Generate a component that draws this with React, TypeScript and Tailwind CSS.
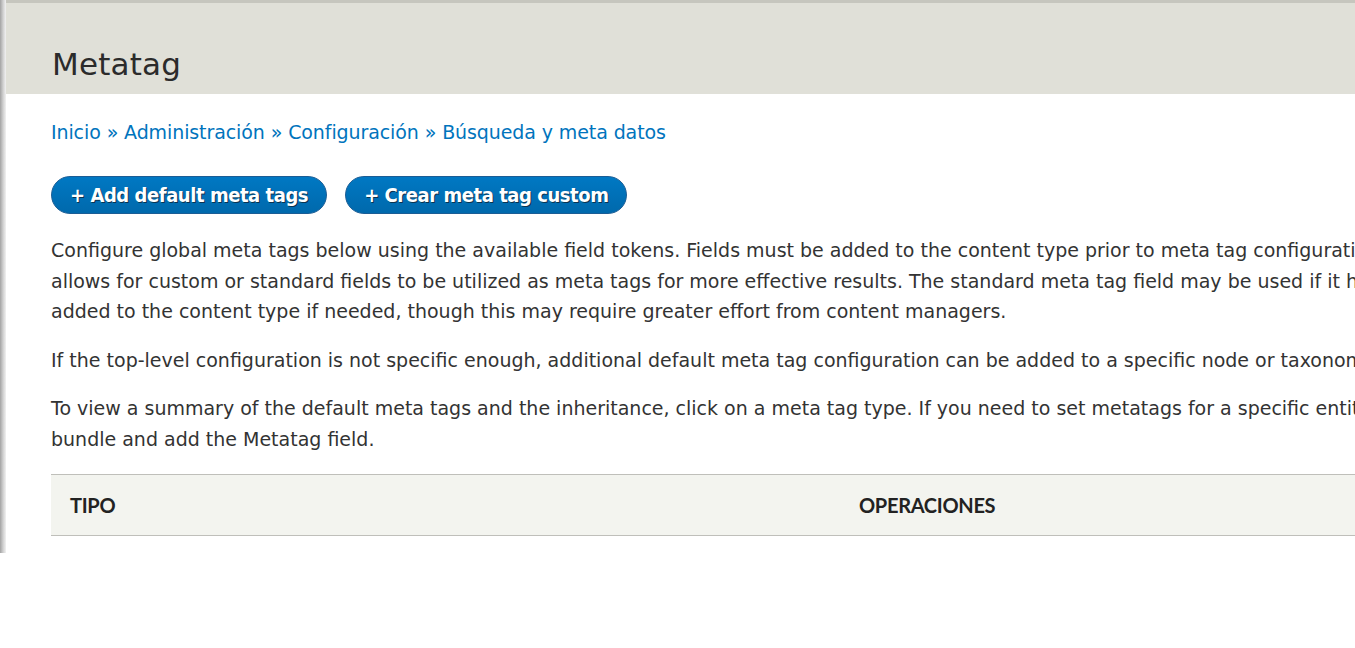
const body = "font-['DejaVu_Sans','Lucida_Grande',sans-serif]";

function Button({ label }: { label: string }) {
  return (
    <a
      href="#"
      className="inline-flex items-center h-[38px] px-[18px] rounded-full border border-[#1b5d95] bg-gradient-to-b from-[#0078c3] to-[#0069ac] text-white font-bold text-[20px] tracking-[-0.45px] font-['DejaVu_Sans_Condensed','DejaVu_Sans',sans-serif] [font-stretch:condensed] [text-shadow:1px_1px_0_#0b3350] whitespace-nowrap"
    >
      + {label}
    </a>
  );
}

export default function App() {
  return (
    <div className="w-[1355px] h-[648px] bg-white overflow-hidden">
      <div className="flex h-[553px] overflow-hidden">
        <div className="w-[6px] shrink-0 bg-gradient-to-r from-[#a3a3a3] via-[#cfcfcf] to-[#f2f2f2]" />
        <div className={`flex-1 min-w-0 ${body} text-[#333]`}>
          <header className="h-[94px] bg-[#e0e0d8] border-t-[3px] border-[#c6c6be] px-[46px] flex items-end pb-[14px]">
            <h1 className="text-[31px] leading-none font-normal text-[#2b2b2b] tracking-[0.2px]">
              Metatag
            </h1>
          </header>

          <div className="pl-[45px] w-[1500px]">
            <nav className="mt-[26px] text-[19px] tracking-[-0.1px] text-[#0074bd] leading-[24px]">
              <a href="#">Inicio</a> » <a href="#">Administración</a> »{" "}
              <a href="#">Configuración</a> » <a href="#">Búsqueda y meta datos</a>
            </nav>

            <div className="flex gap-[18px] mt-[32px]">
              <Button label="Add default meta tags" />
              <Button label="Crear meta tag custom" />
            </div>

            <div className="mt-[21px] text-[19px] leading-[30.5px] text-[#333] whitespace-nowrap">
              <p>
                Configure global meta tags below using the available field tokens. Fields must be added to the content type prior to meta tag configuration. This
                <br />
                allows for custom or standard fields to be utilized as meta tags for more effective results. The standard meta tag field may be used if it has been
                <br />
                added to the content type if needed, though this may require greater effort from content managers.
              </p>
              <p className="mt-[18px]">
                If the top-level configuration is not specific enough, additional default meta tag configuration can be added to a specific node or taxonomy bundle.
              </p>
              <p className="mt-[18px]">
                To view a summary of the default meta tags and the inheritance, click on a meta tag type. If you need to set metatags for a specific entity, edit its
                <br />
                bundle and add the Metatag field.
              </p>
            </div>

            <table className="mt-[20px] w-[1400px] border-collapse">
              <thead>
                <tr className="bg-[#f3f4ef] border-y border-[#bfbfba] h-[61px]">
                  <th className="w-[789px] text-left pl-[19px] font-bold text-[20px] tracking-[-0.3px] text-[#222] font-['Lato',sans-serif]">
                    TIPO
                  </th>
                  <th className="text-left pl-[19px] font-bold text-[20px] tracking-[-0.3px] text-[#222] font-['Lato',sans-serif]">
                    OPERACIONES
                  </th>
                </tr>
              </thead>
            </table>
          </div>
        </div>
      </div>
    </div>
  );
}
